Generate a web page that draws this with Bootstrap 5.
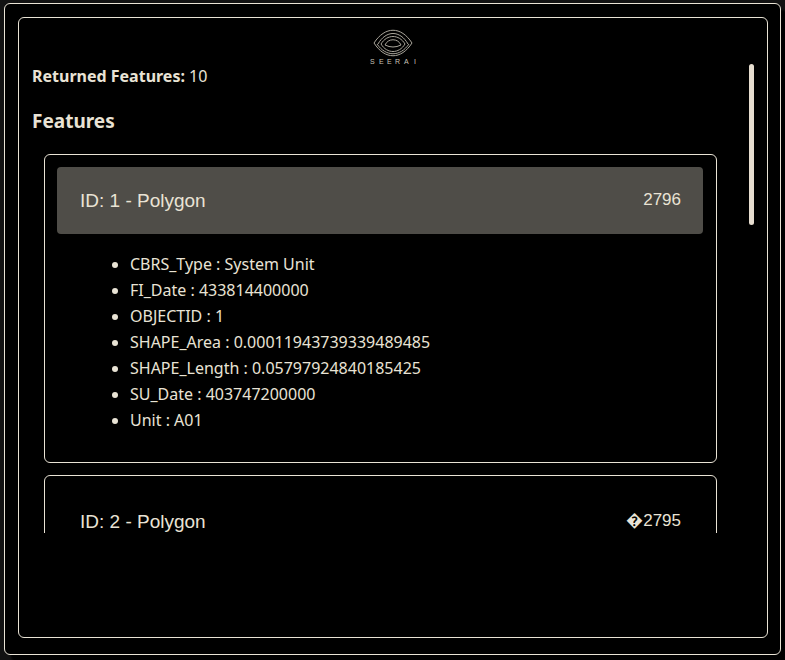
<!DOCTYPE html>
<html lang="en">
<head>
<meta charset="utf-8">
<meta name="viewport" content="width=device-width, initial-scale=1">
<title>SeerAI Features</title>
<link href="https://cdn.jsdelivr.net/npm/bootstrap@5.3.0/dist/css/bootstrap.min.css" rel="stylesheet">
<style>
:root { --cream: #e9e3d5; }
body { background: #121212; color: var(--cream); font-family: "Segoe UI", "Noto Sans", sans-serif; font-size: 16px; line-height: 26px; overflow-x: hidden; }
.frame { border: 1px solid var(--cream); border-radius: 6px; background: #000; }
.outer { margin: 3px 4px 5px; padding: 13px 12px 16px 13px; box-shadow: 7px 7px 2px #000; }
.inner { padding: 11px 13px 0; }
.brand svg { display: block; width: 48px; height: 35px; overflow: visible; }
.viewer { height: 71vh; }
.scroller { scrollbar-width: none; min-width: 0; }
.scroller::-webkit-scrollbar { display: none; }
.thumb { width: 5px; height: 161px; border-radius: 3px; background: #e6ddcf; margin-left: 32px; }
.count { line-height: 24px; }
.section-title { font-size: 19px; line-height: 26px; margin: 20px 0; }
.feature { padding: 12px 13px 12px 12px; margin: 0 0 12px 12px; }
.feature-toggle { font-family: Arial, "Liberation Sans", sans-serif; font-size: 19px; line-height: 27px; padding: 20px 22px 20px 23px; color: var(--cream); background: transparent; border: 0; border-radius: 4px; }
.feature-toggle[aria-expanded="true"] { background: #4f4d48; }
.feature-toggle .value { font-size: 17px; line-height: 26px; }
.props { margin: 17px 0; padding-left: 73px; }
</style>
<script src="https://cdn.jsdelivr.net/npm/bootstrap@5.3.0/dist/js/bootstrap.bundle.min.js"></script>
</head>
<body class="d-flex flex-column min-vh-100">
<div class="frame outer flex-grow-1 d-flex flex-column">
  <main class="frame inner flex-grow-1">
    <div class="brand d-flex justify-content-center">
      <svg viewBox="0 0 48 35" role="img" aria-label="SeerAI" fill="none" stroke="#aaa69b" stroke-width="1">
        <path d="M5 14C16-3 32-3 43 14"/>
        <path d="M9 15C17 1 31 1 39 15"/>
        <path d="M12 15C18 5 30 5 36 15"/>
        <path d="M16 16C19 9 29 9 32 16Q24 20 16 16"/>
        <path d="M5 14C16 31 32 31 43 14"/>
        <path d="M8 15C17 28 31 28 40 15"/>
        <path d="M12 15C18 25 30 25 36 15"/>
        <g fill="#c9c4b8" stroke="none" font-family="Liberation Sans, sans-serif" font-size="7">
          <text x="1" y="35">S</text><text x="10" y="35">E</text><text x="18" y="35">E</text><text x="26" y="35">R</text><text x="35" y="35">A</text><text x="45" y="35">I</text>
        </g>
      </svg>
    </div>
    <div class="viewer d-flex align-items-start">
      <div class="scroller flex-grow-1 h-100 overflow-auto">
        <p class="count mb-0"><strong>Returned Features:</strong> 10</p>
        <h1 class="section-title fw-bold">Features</h1>
        <section class="frame feature">
          <button type="button" class="feature-toggle w-100 d-flex justify-content-between text-start" data-bs-toggle="collapse" data-bs-target="#feature-1" aria-expanded="true" aria-controls="feature-1"><span>ID: 1 - Polygon</span><span class="value">2796</span></button>
          <div id="feature-1" class="collapse show">
            <ul class="props">
              <li>CBRS_Type : System Unit</li>
              <li>FI_Date : 433814400000</li>
              <li>OBJECTID : 1</li>
              <li>SHAPE_Area : 0.00011943739339489485</li>
              <li>SHAPE_Length : 0.05797924840185425</li>
              <li>SU_Date : 403747200000</li>
              <li>Unit : A01</li>
            </ul>
          </div>
        </section>
        <section class="frame feature">
          <button type="button" class="feature-toggle w-100 d-flex justify-content-between text-start" aria-expanded="false"><span>ID: 2 - Polygon</span><span class="value">&#xFFFD;2795</span></button>
        </section>
      </div>
      <div class="thumb flex-shrink-0" aria-hidden="true"></div>
    </div>
  </main>
</div>
</body>
</html>
